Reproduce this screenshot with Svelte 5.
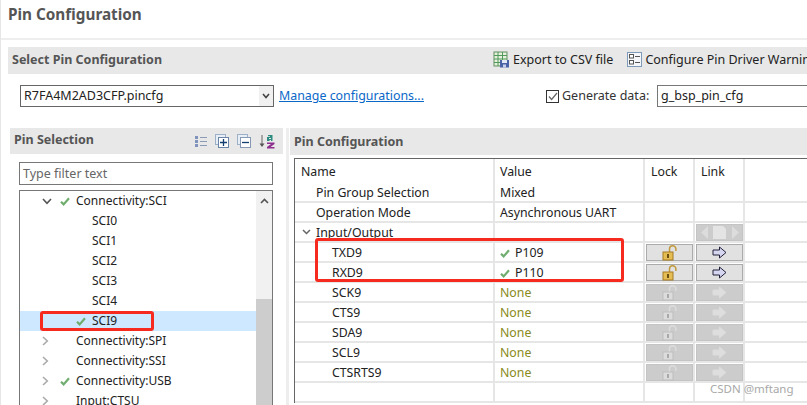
<script>
  const tree = [
    { label: 'Connectivity:SCI', arrow: 'down', check: true, level: 0 },
    { label: 'SCI0', level: 1 },
    { label: 'SCI1', level: 1 },
    { label: 'SCI2', level: 1 },
    { label: 'SCI3', level: 1 },
    { label: 'SCI4', level: 1 },
    { label: 'SCI9', level: 1, check: true, selected: true },
    { label: 'Connectivity:SPI', arrow: 'right', level: 0 },
    { label: 'Connectivity:SSI', arrow: 'right', level: 0 },
    { label: 'Connectivity:USB', arrow: 'right', check: true, level: 0 },
    { label: 'Input:CTSU', arrow: 'right', level: 0 }
  ];
  const rows = [
    { name: 'Pin Group Selection', value: 'Mixed', indent: 1, first: true },
    { name: 'Operation Mode', value: 'Asynchronous UART', indent: 1 },
    { name: 'Input/Output', value: '', indent: 1, arrow: true, link: 'bulk' },
    { name: 'TXD9', value: 'P109', indent: 2, check: true, lock: 'on', link: 'on' },
    { name: 'RXD9', value: 'P110', indent: 2, check: true, lock: 'on', link: 'on' },
    { name: 'SCK9', value: 'None', indent: 2, none: true, lock: 'off', link: 'off' },
    { name: 'CTS9', value: 'None', indent: 2, none: true, lock: 'off', link: 'off' },
    { name: 'SDA9', value: 'None', indent: 2, none: true, lock: 'off', link: 'off' },
    { name: 'SCL9', value: 'None', indent: 2, none: true, lock: 'off', link: 'off' },
    { name: 'CTSRTS9', value: 'None', indent: 2, none: true, lock: 'off', link: 'off' },
    { name: '', value: '' }
  ];
</script>

{#snippet check(cls)}
  <svg class={cls} width="10" height="9" viewBox="0 0 10 9"><path d="M1 4.800 3.600 7.400 9 1.200" fill="none" stroke="#6fae6f" stroke-width="2.200"/></svg>
{/snippet}

{#snippet lockIcon(on)}
  <svg width="16" height="16" viewBox="0 0 16 16">
    <path d="M7.500 7V4a3.200 3.200 0 0 1 6.400 0v2" fill="none" stroke={on ? '#c09a3c' : '#dcdcdc'} stroke-width="1.500"/>
    <rect x="1" y="7" width="10" height="8" fill={on ? '#e4bd55' : '#dcdcdc'} stroke={on ? '#a87b20' : '#bdbdbd'}/>
    <rect x="5" y="9" width="2" height="4" fill={on ? '#6b4f10' : '#a8a8a8'}/>
  </svg>
{/snippet}

{#snippet arrowIcon(on)}
  <svg width="15" height="13" viewBox="0 0 15 13">
    <path d="M1 4h6.500V1L14 6.500 7.500 12V9H1z" fill={on ? '#d6d6f0' : '#dedede'} stroke={on ? '#22223c' : '#dcdcdc'}/>
  </svg>
{/snippet}

<div class="page">
  <h1 class="title">Pin Configuration</h1>
  <div class="body">
    <div class="bar">
      <span class="bar-title">Select Pin Configuration</span>
      <div class="actions">
        <span class="action">
          <svg width="17" height="17" viewBox="0 0 17 17">
            <rect x="1" y="1" width="13" height="14" fill="#e6f0dc" stroke="#5f8f5f"/>
            <path d="M1 4.500h13M1 8h13M1 11.500h13M5 1v14M9.500 1v14" stroke="#4f9a5a"/>
            <rect x="7" y="9" width="9" height="7.500" fill="#4a63a8"/>
            <rect x="9" y="9" width="5" height="3" fill="#e4e8f4"/>
            <rect x="10" y="13.500" width="3" height="3" fill="#c8d0e8"/>
          </svg>
          Export to CSV file
        </span>
        <span class="action">
          <svg width="15" height="15" viewBox="0 0 15 15">
            <rect x=".5" y=".5" width="14" height="14" fill="#f4f6fa" stroke="#7f9ab8"/>
            <rect x="2.500" y="2.500" width="4" height="3.500" fill="#fff" stroke="#555"/>
            <rect x="2.500" y="8.500" width="4" height="3.500" fill="#fff" stroke="#555"/>
            <path d="M8 4.500h5M8 10.500h5" stroke="#555"/>
          </svg>
          Configure Pin Driver Warnings
        </span>
      </div>
    </div>

    <div class="config-row">
      <div class="select">
        <span>R7FA4M2AD3CFP.pincfg</span>
        <span class="select-btn">
          <svg width="8" height="6" viewBox="0 0 8 6"><path d="M1 1 4 4.500 7 1" fill="none" stroke="#444" stroke-width="1.600"/></svg>
        </span>
      </div>
      <a class="link" href="#manage">Manage configurations...</a>
      <span class="checkbox">
        <svg width="10" height="9" viewBox="0 0 10 9"><path d="M1 4.500 3.600 7.500 9 1" fill="none" stroke="#666" stroke-width="1.200"/></svg>
      </span>
      <span class="gen-label">Generate data:</span>
      <div class="gen-input">g_bsp_pin_cfg</div>
    </div>

    <div class="panels">
      <section class="left">
        <div class="panel-head left-head">
          <span class="panel-title">Pin Selection</span>
          <span class="tools">
            <svg width="13" height="13" viewBox="0 0 13 13"><path d="M1 1h3v3H1zM1 5h3v3H1zM1 9h3v3H1z" fill="#7f93bd"/><path d="M6 2.500h7M6 6.500h7M6 10.500h7" stroke="#8a9bb5"/></svg>
            <svg width="14" height="14" viewBox="0 0 14 14"><rect x=".5" y=".5" width="10" height="10" fill="#e8eef5" stroke="#9db0c8"/><rect x="3.500" y="3.500" width="10" height="10" fill="#fff" stroke="#6a84a8"/><path d="M8.500 5v7M5 8.500h7" stroke="#123f70" stroke-width="1.300"/></svg>
            <svg width="14" height="14" viewBox="0 0 14 14"><rect x=".5" y=".5" width="10" height="10" fill="#e8eef5" stroke="#9db0c8"/><rect x="3.500" y="3.500" width="10" height="10" fill="#fff" stroke="#8599b5"/><path d="M5 8.500h7" stroke="#123f70" stroke-width="1.300"/></svg>
            <svg width="17" height="16" viewBox="0 0 17 16"><path d="M3 2v11" stroke="#666"/><path d="M.5 10.500 3 14l2.500-3.500z" fill="#555"/><path d="M9 2h4.500v6H12V7h-1.500v1H8V4h3V3.300H9zM10 5v1h2V5z" fill="#2c8c80"/><path d="M8 9.500h7.500V11l-4 3h4v1.500H8V14l4-3H8z" fill="#8e2e8e"/></svg>
          </span>
        </div>
        <div class="filter">Type filter text</div>
        <div class="tree">
          <div class="tree-rows">
            {#each tree as item}
              <div class="tree-row" class:selected={item.selected} class:child={item.level === 1}>
                {#if item.level === 0}
                  <span class="twist">
                    {#if item.arrow === 'down'}
                      <svg width="10" height="7" viewBox="0 0 10 7"><path d="M1 1 5 5.300 9 1" fill="none" stroke="#555" stroke-width="1.600"/></svg>
                    {:else}
                      <svg width="7" height="10" viewBox="0 0 7 10"><path d="M1 1 5.300 5 1 9" fill="none" stroke="#aaa" stroke-width="1.600"/></svg>
                    {/if}
                  </span>
                {/if}
                <span class="mark">
                  {#if item.check}{@render check('tree-check')}{/if}
                </span>
                <span>{item.label}</span>
              </div>
            {/each}
          </div>
          <div class="scroll">
            <svg class="scroll-up" width="9" height="6" viewBox="0 0 9 6"><path d="M1 5 4.500 1.500 8 5" fill="none" stroke="#555" stroke-width="1.600"/></svg>
            <div class="thumb"></div>
          </div>
        </div>
      </section>

      <section class="right">
        <div class="panel-head right-head"><span class="panel-title">Pin Configuration</span></div>
        <div class="table">
          <div class="t-row t-head">
            <div class="cell name">Name</div>
            <div class="cell val">Value</div>
            <div class="cell lock">Lock</div>
            <div class="cell linkc">Link</div>
            <div class="cell rest"></div>
          </div>
          {#each rows as r}
            <div class="t-row" class:first={r.first}>
              <div class="cell name" class:i1={r.indent === 1} class:i2={r.indent === 2}>
                {#if r.arrow}
                  <svg class="io-arrow" width="9" height="6" viewBox="0 0 9 6"><path d="M1 1 4.500 4.500 8 1" fill="none" stroke="#666" stroke-width="1.500"/></svg>
                {/if}
                {r.name}
              </div>
              <div class="cell val" class:none={r.none}>
                {#if r.check}{@render check('val-check')}{/if}{r.value}
              </div>
              <div class="cell lock btn-cell">
                {#if r.lock}
                  <span class="btn" class:off={r.lock === 'off'}>{@render lockIcon(r.lock === 'on')}</span>
                {/if}
              </div>
              <div class="cell linkc btn-cell">
                {#if r.link === 'bulk'}
                  <span class="btn off bulk">
                    <svg width="40" height="15" viewBox="0 0 40 15"><path d="M8 1 1 7.500 8 14zM32 1l7 6.500-7 6.500z" fill="#dcdcdc"/><path d="M13 1h10l3 3v10H13z" fill="#e4e4e4"/></svg>
                  </span>
                {:else if r.link}
                  <span class="btn" class:off={r.link === 'off'}>{@render arrowIcon(r.link === 'on')}</span>
                {/if}
              </div>
              <div class="cell rest"></div>
            </div>
          {/each}
        </div>
      </section>
    </div>
  </div>

  <div class="mark-red sci"></div>
  <div class="mark-red pins"></div>
  <div class="wm">CSDN @mftang</div>
</div>

<style>
  :global(body) { margin: 0; background: #fff; }
  .page {
    position: relative;
    width: 807px;
    height: 405px;
    overflow: hidden;
    box-sizing: border-box;
    border-left: 1px solid #e6e6e6;
    font: 12.5px/20px "Noto Sans", "Noto Sans CJK SC", sans-serif;
    color: #222;
  }
  .title {
    margin: 0;
    box-sizing: border-box;
    padding: 1px 0 0 7px;
    font-size: 15.3px;
    line-height: 26px;
    font-weight: 700;
    color: #555;
    border-bottom: 2px solid #eee;
    height: 40px;
  }
  .body { padding: 7px 0 0 7px; }
  .bar {
    height: 27px;
    background: #e8e8e8;
    display: flex;
    align-items: center;
    justify-content: space-between;
    padding-left: 4px;
    padding-bottom: 2px;
    box-sizing: border-box;
    white-space: nowrap;
  }
  .bar-title, .panel-title { font-weight: 700; color: #555; font-size: 12.5px; }
  .actions { display: flex; gap: 14px; width: 314px; flex: none; }
  .action { display: flex; align-items: center; gap: 3px; }
  .config-row {
    display: flex;
    align-items: center;
    height: 22px;
    margin-top: 11px;
    padding-left: 12px;
    white-space: nowrap;
  }
  .select {
    width: 254px;
    height: 22px;
    box-sizing: border-box;
    border: 1px solid #666;
    display: flex;
    justify-content: space-between;
    padding-left: 3px;
    flex: none;
  }
  .select-btn {
    width: 14px;
    background: #f0f0f0;
    display: flex;
    align-items: center;
    justify-content: center;
  }
  .link { color: #0a68c8; margin-left: 5px; width: 267px; flex: none; font-size: 12.4px; }
  .checkbox {
    width: 13px;
    height: 13px;
    box-sizing: border-box;
    border: 1px solid #333;
    display: flex;
    align-items: center;
    justify-content: center;
    flex: none;
  }
  .gen-label { margin-left: 3px; width: 95px; flex: none; color: #333; }
  .gen-input {
    flex: 1;
    height: 22px;
    box-sizing: border-box;
    border: 1px solid #777;
    border-right: 0;
    padding-left: 3px;
  }
  .panels { display: flex; margin-top: 21px; height: 277px; }
  .left { width: 273px; margin-left: 2px; flex: none; border-right: 3px solid #eee; padding-right: 3px; }
  .right { flex: 1; margin-left: 1px; min-width: 0; }
  .panel-head {
    background: #e8e8e8;
    display: flex;
    align-items: center;
    justify-content: space-between;
    padding-left: 4px;
  }
  .left-head { height: 26px; padding-bottom: 2px; box-sizing: border-box; }
  .right-head { height: 27px; }
  .tools { display: flex; align-items: center; gap: 8px; padding-right: 7px; padding-top: 2px; }
  .filter {
    margin: 8px 10px 0 9px;
    height: 23px;
    box-sizing: border-box;
    border: 1px solid #777;
    padding-left: 3px;
    color: #666;
    line-height: 21px;
  }
  .tree {
    margin: 5px 10px 0 9px;
    height: 225px;
    box-sizing: border-box;
    border: 1px solid #777;
    border-bottom: 0;
    display: flex;
    overflow: hidden;
    font-size: 12px;
  }
  .tree-rows { flex: 1; min-width: 0; }
  .tree-row { height: 20px; display: flex; align-items: center; padding-left: 22px; }
  .tree-row.child { padding-left: 56px; }
  .tree-row.selected { background: #cde8ff; }
  .twist { width: 18px; display: flex; align-items: center; flex: none; }
  .mark { width: 16px; flex: none; display: flex; align-items: center; }
  .scroll { width: 16px; flex: none; background: #f1f1f1; display: flex; flex-direction: column; }
  .scroll-up { margin: 7px auto 0; flex: none; }
  .thumb { margin-top: 95px; flex: 1; background: #cdcdcd; }
  .table {
    margin-top: 3px;
    margin-left: 4px;
    border-top: 1px solid #666;
    border-left: 1px solid #666;
  }
  .t-row { display: flex; height: 20px; box-sizing: border-box; border-bottom: 2px solid #e6e6e6; line-height: 20px; }
  .t-row.t-head { height: 24px; border-bottom: 0; }
  .cell { box-sizing: border-box; border-right: 2px solid #e6e6e6; white-space: nowrap; flex: none; font-size: 12.3px; }
  .t-head .cell { padding-top: 3px; line-height: 20px; }
  .name { width: 200px; padding-left: 6px; }
  .name.i1 { padding-left: 21px; position: relative; }
  .name.i2 { padding-left: 37px; }
  .io-arrow { position: absolute; left: 7px; top: 6px; }
  .val { width: 150px; padding-left: 5px; display: flex; align-items: flex-start; }
  .val-check { margin: 6px 5px 0 0; }
  .none { color: #8a8a20; }
  .lock, .linkc { width: 50px; }
  .t-head .lock, .t-head .linkc { padding-left: 6px; }
  .rest { flex: 1; border-right: 0; }
  .btn-cell { padding: 0 1px; }
  .btn {
    display: flex;
    align-items: center;
    justify-content: center;
    width: 47px;
    height: 17px;
    box-sizing: border-box;
    border: 1px solid #ababab;
    background: #e1e1e1;
    margin-top: 1px;
  }
  .btn.off { background: #cccccc; border-color: #c4c4c4; }
  .mark-red {
    position: absolute;
    box-sizing: border-box;
    border: 3px solid #f72a20;
    border-radius: 3px;
  }
  .sci { left: 39px; top: 311px; width: 114px; height: 20px; }
  .pins { left: 314px; top: 238px; width: 309px; height: 44px; }
  .wm { position: absolute; left: 709px; top: 379px; font-size: 11.5px; color: #a8a8a8; line-height: 20px; }
</style>
